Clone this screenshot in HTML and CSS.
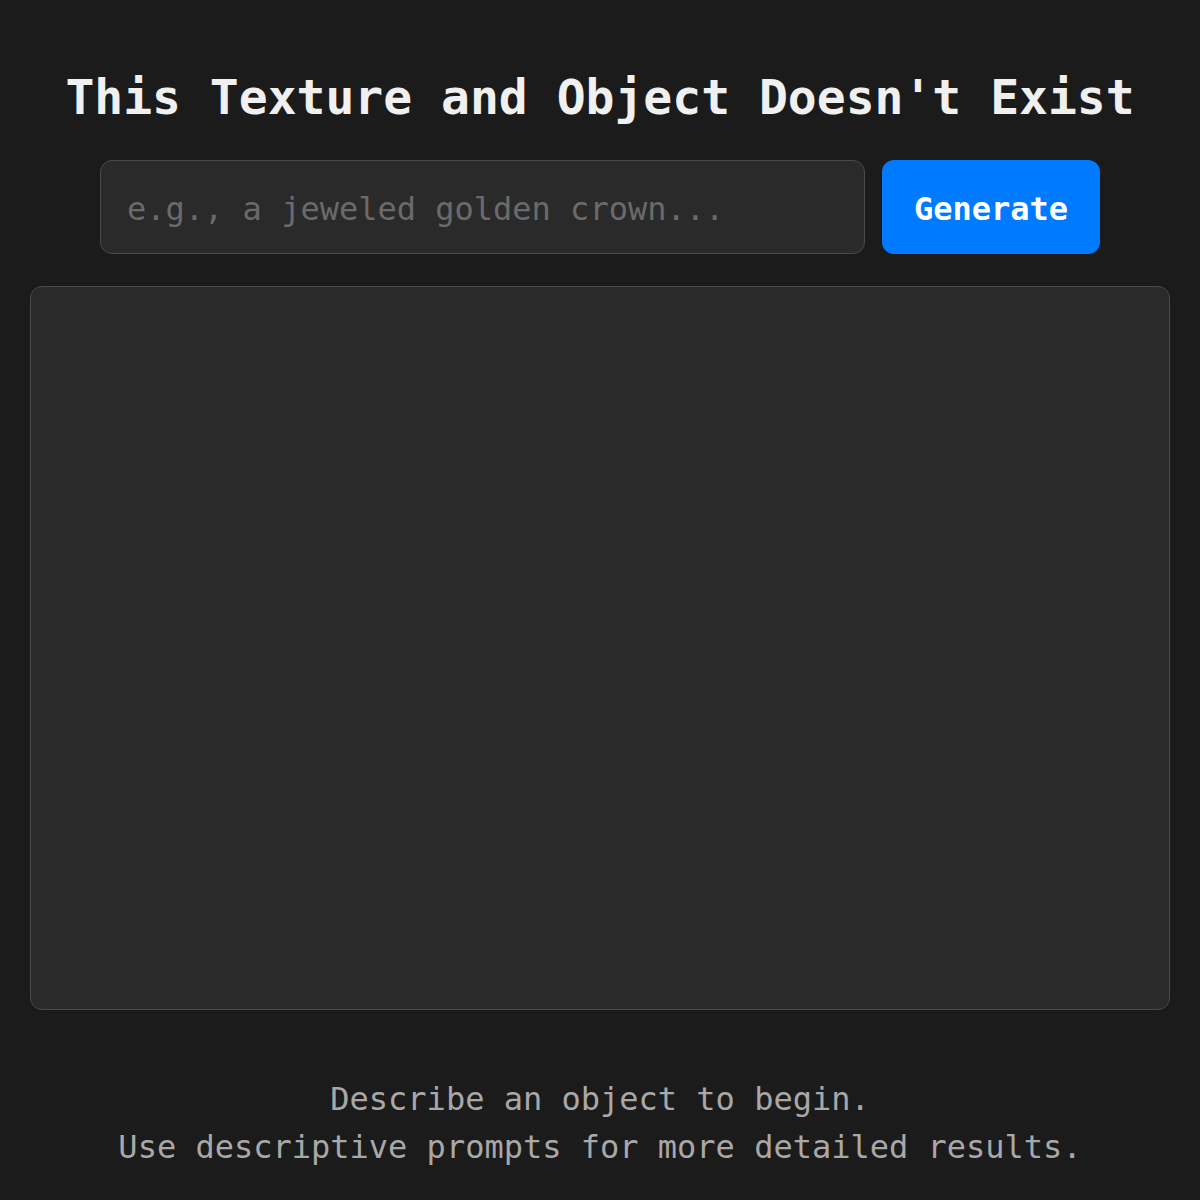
FILE: index.html
```html
<!DOCTYPE html>
<html lang="en">
<head>
    <meta charset="UTF-8">
    <meta name="viewport" content="width=device-width, initial-scale=1.0">
    <title>This Texture and Object Doesn't Exist</title>
    <link rel="stylesheet" href="styles.css">
</head>
<body>
    <div class="container">
        <h1 class="title">This Texture and Object Doesn't Exist</h1>

        <form class="prompt-form" onsubmit="return false;">
            <input class="prompt-input" type="text" placeholder="e.g., a jeweled golden crown...">
            <button class="generate-btn" type="submit">Generate</button>
        </form>

        <div class="viewer">
            <!-- 3D preview renders here -->
        </div>

        <div class="status">
            <p>Describe an object to begin.</p>
            <p>Use descriptive prompts for more detailed results.</p>
        </div>
    </div>
</body>
</html>
```

FILE: styles.css
```css
* {
    margin: 0;
    padding: 0;
    box-sizing: border-box;
}

body {
    font-family: 'DejaVu Sans Mono', 'Liberation Mono', monospace;
    background: #1b1b1b;
    color: #f0f0f0;
    min-height: 100vh;
}

.container {
    padding: 68px 30px 30px;
    display: flex;
    flex-direction: column;
    align-items: center;
}

.title {
    font-size: 48px;
    line-height: 58px;
    font-weight: bold;
    color: #f0f0f0;
    text-align: center;
    margin-bottom: 34px;
}

.prompt-form {
    width: 1000px;
    display: flex;
    gap: 17px;
    margin-bottom: 32px;
}

.prompt-input {
    flex: 1;
    height: 94px;
    padding: 4px 26px 0;
    background: #2a2a2a;
    border: 1.5px solid #4a4a4a;
    border-radius: 12px;
    color: #e0e0e0;
    font-family: inherit;
    font-size: 32px;
    outline: none;
}

.prompt-input::placeholder {
    color: #6a6a6a;
}

.generate-btn {
    width: 218px;
    height: 94px;
    padding-top: 4px;
    background: #007bff;
    color: #fff;
    border: none;
    border-radius: 12px;
    font-family: inherit;
    font-size: 32px;
    font-weight: bold;
    cursor: pointer;
}

.viewer {
    width: 100%;
    height: 724px;
    background: #2a2a2a;
    border: 1.5px solid #4a4a4a;
    border-radius: 12px;
}

.status {
    margin-top: 65px;
    text-align: center;
    color: #a8a8a8;
    font-size: 32px;
    line-height: 48px;
}
```
